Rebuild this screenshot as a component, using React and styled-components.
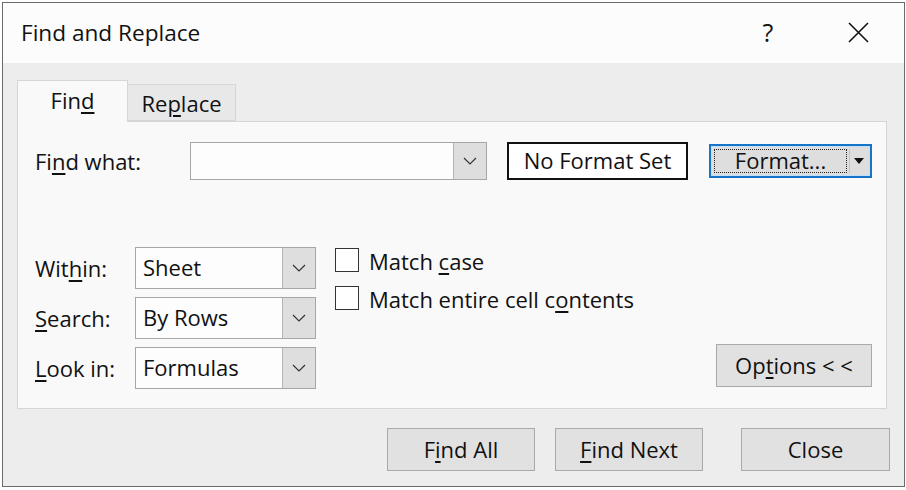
import React from "react";
import styled, { createGlobalStyle } from "styled-components";

const Global = createGlobalStyle`
  html, body { margin: 0; padding: 0; background: #ffffff; }
  body { font-family: "Open Sans", "Noto Sans", sans-serif; color: #111; }
  u { text-underline-offset: 3px; text-decoration-thickness: 1.5px; }
`;

const Window = styled.div`
  margin: 2px 0 0 2px;
  width: 903px;
  height: 485px;
  box-sizing: border-box;
  border: 1px solid #6a6a6a;
  display: flex;
  flex-direction: column;
  background: #ededed;
  font-size: 22px;
`;

const TitleBar = styled.div`
  height: 60px;
  background: #fcfcfc;
  display: flex;
  align-items: center;
  padding-left: 18px;
  flex-shrink: 0;
`;

const Title = styled.div`
  font-size: 22.6px;
  flex: 1;
  padding-bottom: 2px;
`;

const TitleIcon = styled.div`
  width: ${(p) => p.$w}px;
  margin-left: ${(p) => p.$ml || 0}px;
  display: flex;
  justify-content: center;
  align-items: center;
  font-size: 25px;
  padding-bottom: 2px;
`;

const Body = styled.div`
  flex: 1;
  display: flex;
  flex-direction: column;
  padding: 16px 14px 0 14px;
`;

const Tabs = styled.div`
  display: flex;
  align-items: flex-end;
  height: 42px;
  position: relative;
  z-index: 1;
`;

const Tab = styled.div`
  box-sizing: border-box;
  width: ${(p) => p.$w}px;
  height: ${(p) => (p.$active ? 42 : 37)}px;
  margin-bottom: ${(p) => (p.$active ? -1 : 0)}px;
  border: 1px solid #d6d6d6;
  border-bottom: ${(p) => (p.$active ? "none" : "1px solid #d6d6d6")};
  border-left: ${(p) => (p.$active ? "1px solid #d6d6d6" : "none")};
  background: ${(p) => (p.$active ? "#f9f9f9" : "#e8e8e8")};
  display: flex;
  align-items: center;
  justify-content: center;
  padding-bottom: ${(p) => (p.$active ? 4 : 0)}px;
`;

const Panel = styled.div`
  box-sizing: border-box;
  width: 870px;
  height: 288px;
  background: #f9f9f9;
  border: 1px solid #d6d6d6;
  padding: 20px 14px 0 17px;
  display: flex;
  flex-direction: column;
`;

const FindRow = styled.div`
  display: flex;
  align-items: center;
  height: 38px;
`;

const Label = styled.div`
  width: ${(p) => p.$w}px;
  flex-shrink: 0;
`;

const Combo = styled.div`
  box-sizing: border-box;
  width: ${(p) => p.$w}px;
  height: ${(p) => p.$h}px;
  border: 1px solid #a6a6a6;
  background: #fdfdfd;
  display: flex;
  align-items: stretch;
`;

const ComboText = styled.div`
  flex: 1;
  display: flex;
  align-items: center;
  padding-left: 7px;
  padding-bottom: 2px;
`;

const ComboButton = styled.div`
  width: 32px;
  background: #dedede;
  border-left: 1px solid #b5b5b5;
  display: flex;
  align-items: center;
  justify-content: center;
`;

const Chevron = () => (
  <svg width="14" height="8" viewBox="0 0 14 8">
    <path d="M1 1 L7 7 L13 1" fill="none" stroke="#333" strokeWidth="1.2" />
  </svg>
);

const Preview = styled.div`
  box-sizing: border-box;
  width: 181px;
  height: 38px;
  margin-left: 20px;
  border: 2px solid #111;
  background: #fff;
  display: flex;
  align-items: center;
  justify-content: center;
  padding-bottom: 2px;
`;

const SplitButton = styled.div`
  box-sizing: border-box;
  width: 163px;
  height: 34px;
  margin-left: 21px;
  border: 2px solid #1675c9;
  box-shadow: inset 0 0 0 1px #bfe0f7;
  background: #dedede;
  display: flex;
  align-items: stretch;
  padding: 3px 2px 3px 3px;
`;

const FocusRect = styled.div`
  flex: 1;
  border: 1.5px dotted #222;
  display: flex;
  align-items: center;
  justify-content: center;
  padding-bottom: 2px;
`;

const SplitArrow = styled.div`
  width: 18px;
  margin-left: 2px;
  border-left: 1px solid #c4c4c4;
  display: flex;
  align-items: center;
  justify-content: center;
`;

const Lower = styled.div`
  margin-top: 67px;
  display: flex;
  align-items: flex-start;
`;

const SelectColumn = styled.div`
  display: flex;
  flex-direction: column;
  gap: 8px;
`;

const SelectRow = styled.div`
  display: flex;
  align-items: center;
`;

const CheckColumn = styled.div`
  margin-left: 19px;
  display: flex;
  flex-direction: column;
  gap: 14px;
  padding-top: 1px;
`;

const CheckRow = styled.div`
  display: flex;
  align-items: center;
  height: 24px;
`;

const Box = styled.div`
  box-sizing: border-box;
  width: 24px;
  height: 24px;
  border: 1.5px solid #333;
  background: #fff;
  margin-right: 10px;
`;

const CheckLabel = styled.div`
  padding-top: 1px;
`;

const Spacer = styled.div`
  flex: 1;
`;

const Button = styled.div`
  box-sizing: border-box;
  width: ${(p) => p.$w}px;
  height: ${(p) => p.$h}px;
  margin-left: ${(p) => p.$ml || 0}px;
  margin-bottom: ${(p) => p.$mb || 0}px;
  background: #e1e1e1;
  border: 1px solid #a9a9a9;
  display: flex;
  align-items: center;
  justify-content: center;
  padding-bottom: 2px;
  align-self: ${(p) => p.$self || "auto"};
`;

const Footer = styled.div`
  display: flex;
  justify-content: flex-end;
  margin-top: 19px;
`;

const selects = [
  { label: <>Wit<u>h</u>in:</>, value: "Sheet" },
  { label: <><u>S</u>earch:</>, value: "By Rows" },
  { label: <><u>L</u>ook in:</>, value: "Formulas" },
];

export default function App() {
  return (
    <>
      <Global />
      <Window>
        <TitleBar>
          <Title>Find and Replace</Title>
          <TitleIcon $w={30}>?</TitleIcon>
          <TitleIcon $w={60} $ml={45}>
            <svg width="21" height="21" viewBox="0 0 21 21">
              <path d="M1 1 L20 20 M20 1 L1 20" stroke="#111" strokeWidth="1.6" fill="none" />
            </svg>
          </TitleIcon>
          <TitleIcon $w={16} />
        </TitleBar>
        <Body>
          <Tabs>
            <Tab $active $w={111}>
              <span>Fin<u>d</u></span>
            </Tab>
            <Tab $w={108}>
              <span>Re<u>p</u>lace</span>
            </Tab>
          </Tabs>
          <Panel>
            <FindRow>
              <Label $w={155}>
                Fi<u>n</u>d what:
              </Label>
              <Combo $w={297} $h={38}>
                <ComboText />
                <ComboButton>
                  <Chevron />
                </ComboButton>
              </Combo>
              <Preview>No Format Set</Preview>
              <SplitButton>
                <FocusRect>Format...</FocusRect>
                <SplitArrow>
                  <svg width="10" height="6" viewBox="0 0 10 6">
                    <path d="M0 0 L10 0 L5 6 Z" fill="#111" />
                  </svg>
                </SplitArrow>
              </SplitButton>
            </FindRow>
            <Lower>
              <SelectColumn>
                {selects.map((s, i) => (
                  <SelectRow key={i}>
                    <Label $w={100}>{s.label}</Label>
                    <Combo $w={181} $h={42}>
                      <ComboText>{s.value}</ComboText>
                      <ComboButton>
                        <Chevron />
                      </ComboButton>
                    </Combo>
                  </SelectRow>
                ))}
              </SelectColumn>
              <CheckColumn>
                <CheckRow>
                  <Box />
                  <CheckLabel>
                    Match <u>c</u>ase
                  </CheckLabel>
                </CheckRow>
                <CheckRow>
                  <Box />
                  <CheckLabel>
                    Match entire cell c<u>o</u>ntents
                  </CheckLabel>
                </CheckRow>
              </CheckColumn>
              <Spacer />
              <Button $w={156} $h={43} $self="flex-end" $mb={2}>
                <span>
                  Op<u>t</u>ions &lt; &lt;
                </span>
              </Button>
            </Lower>
          </Panel>
          <Footer>
            <Button $w={148} $h={43}>
              <span>
                F<u>i</u>nd All
              </span>
            </Button>
            <Button $w={148} $h={43} $ml={20}>
              <span>
                <u>F</u>ind Next
              </span>
            </Button>
            <Button $w={149} $h={43} $ml={38}>
              Close
            </Button>
          </Footer>
        </Body>
      </Window>
    </>
  );
}
